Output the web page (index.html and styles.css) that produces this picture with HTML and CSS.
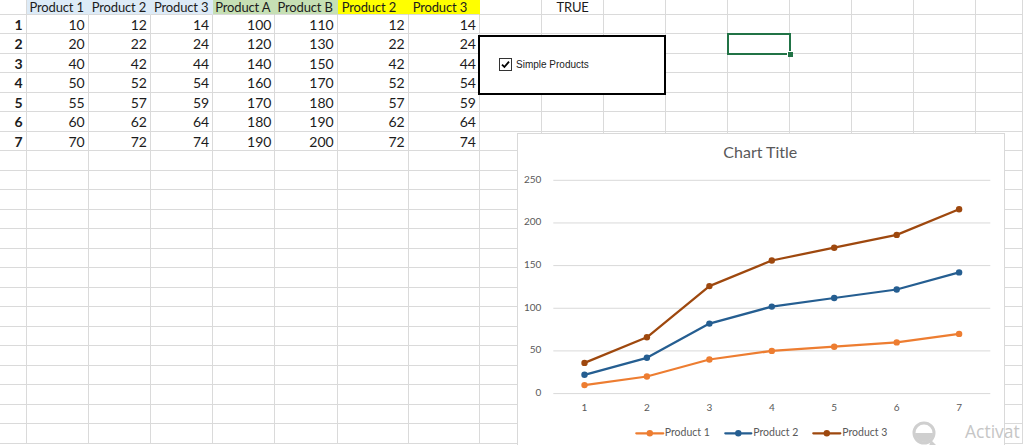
FILE: index.html
```html
<!DOCTYPE html>
<html>
<head>
<meta charset="utf-8">
<link rel="stylesheet" href="styles.css">
</head>
<body>
<div class="sheet">
  <div class="row head">
    <i></i><i class="blue">Product 1</i><i class="blue">Product 2</i><i class="blue">Product 3</i><i class="green">Product A</i><i class="green">Product B</i><i class="yellow">Product 2</i><i class="yellow">Product 3</i><i></i><i class="ctr">TRUE</i><i></i><i></i><i></i><i></i><i></i><i></i><i></i>
  </div>
  <div class="row"><b>1</b><i>10</i><i>12</i><i>14</i><i>100</i><i>110</i><i>12</i><i>14</i><i></i><i></i><i></i><i></i><i></i><i></i><i></i><i></i><i></i></div>
  <div class="row"><b>2</b><i>20</i><i>22</i><i>24</i><i>120</i><i>130</i><i>22</i><i>24</i><i></i><i></i><i></i><i></i><i class="sel"></i><i></i><i></i><i></i><i></i></div>
  <div class="row"><b>3</b><i>40</i><i>42</i><i>44</i><i>140</i><i>150</i><i>42</i><i>44</i><i></i><i></i><i></i><i></i><i></i><i></i><i></i><i></i><i></i></div>
  <div class="row"><b>4</b><i>50</i><i>52</i><i>54</i><i>160</i><i>170</i><i>52</i><i>54</i><i></i><i></i><i></i><i></i><i></i><i></i><i></i><i></i><i></i></div>
  <div class="row"><b>5</b><i>55</i><i>57</i><i>59</i><i>170</i><i>180</i><i>57</i><i>59</i><i></i><i></i><i></i><i></i><i></i><i></i><i></i><i></i><i></i></div>
  <div class="row"><b>6</b><i>60</i><i>62</i><i>64</i><i>180</i><i>190</i><i>62</i><i>64</i><i></i><i></i><i></i><i></i><i></i><i></i><i></i><i></i><i></i></div>
  <div class="row"><b>7</b><i>70</i><i>72</i><i>74</i><i>190</i><i>200</i><i>72</i><i>74</i><i></i><i></i><i></i><i></i><i></i><i></i><i></i><i></i><i></i></div>
  <div class="row"><b></b><i></i><i></i><i></i><i></i><i></i><i></i><i></i><i></i><i></i><i></i><i></i><i></i><i></i><i></i><i></i><i></i></div>
  <div class="row"><b></b><i></i><i></i><i></i><i></i><i></i><i></i><i></i><i></i><i></i><i></i><i></i><i></i><i></i><i></i><i></i><i></i></div>
  <div class="row"><b></b><i></i><i></i><i></i><i></i><i></i><i></i><i></i><i></i><i></i><i></i><i></i><i></i><i></i><i></i><i></i><i></i></div>
  <div class="row"><b></b><i></i><i></i><i></i><i></i><i></i><i></i><i></i><i></i><i></i><i></i><i></i><i></i><i></i><i></i><i></i><i></i></div>
  <div class="row"><b></b><i></i><i></i><i></i><i></i><i></i><i></i><i></i><i></i><i></i><i></i><i></i><i></i><i></i><i></i><i></i><i></i></div>
  <div class="row"><b></b><i></i><i></i><i></i><i></i><i></i><i></i><i></i><i></i><i></i><i></i><i></i><i></i><i></i><i></i><i></i><i></i></div>
  <div class="row"><b></b><i></i><i></i><i></i><i></i><i></i><i></i><i></i><i></i><i></i><i></i><i></i><i></i><i></i><i></i><i></i><i></i></div>
  <div class="row"><b></b><i></i><i></i><i></i><i></i><i></i><i></i><i></i><i></i><i></i><i></i><i></i><i></i><i></i><i></i><i></i><i></i></div>
  <div class="row"><b></b><i></i><i></i><i></i><i></i><i></i><i></i><i></i><i></i><i></i><i></i><i></i><i></i><i></i><i></i><i></i><i></i></div>
  <div class="row"><b></b><i></i><i></i><i></i><i></i><i></i><i></i><i></i><i></i><i></i><i></i><i></i><i></i><i></i><i></i><i></i><i></i></div>
  <div class="row"><b></b><i></i><i></i><i></i><i></i><i></i><i></i><i></i><i></i><i></i><i></i><i></i><i></i><i></i><i></i><i></i><i></i></div>
  <div class="row"><b></b><i></i><i></i><i></i><i></i><i></i><i></i><i></i><i></i><i></i><i></i><i></i><i></i><i></i><i></i><i></i><i></i></div>
  <div class="row"><b></b><i></i><i></i><i></i><i></i><i></i><i></i><i></i><i></i><i></i><i></i><i></i><i></i><i></i><i></i><i></i><i></i></div>
  <div class="row"><b></b><i></i><i></i><i></i><i></i><i></i><i></i><i></i><i></i><i></i><i></i><i></i><i></i><i></i><i></i><i></i><i></i></div>
  <div class="row"><b></b><i></i><i></i><i></i><i></i><i></i><i></i><i></i><i></i><i></i><i></i><i></i><i></i><i></i><i></i><i></i><i></i></div>
</div>

<div class="formbox">
  <div class="chk">
    <span class="box"><svg width="11" height="11" viewBox="0 0 11 11"><path d="M2 5.6 L4.4 8 L9 2.6" fill="none" stroke="#000" stroke-width="1.8"/></svg></span>
    <span class="lbl">Simple Products</span>
  </div>
</div>

<div class="chart">
  <svg width="488" height="320" viewBox="516.7 132.7 488 320">
    <text class="title" x="760" y="154">Chart Title</text>
    <g class="grid">
      <line x1="553" x2="990" y1="180" y2="180"/>
      <line x1="553" x2="990" y1="222.65" y2="222.65"/>
      <line x1="553" x2="990" y1="265.3" y2="265.3"/>
      <line x1="553" x2="990" y1="307.95" y2="307.95"/>
      <line x1="553" x2="990" y1="350.6" y2="350.6"/>
      <line x1="553" x2="990" y1="393.3" y2="393.3"/>
    </g>
    <g class="ylab">
      <text x="541" y="180">250</text>
      <text x="541" y="222.65">200</text>
      <text x="541" y="265.3">150</text>
      <text x="541" y="307.95">100</text>
      <text x="541" y="350.6">50</text>
      <text x="541" y="393.3">0</text>
    </g>
    <g class="xlab">
      <text x="584.2" y="408">1</text>
      <text x="646.6" y="408">2</text>
      <text x="709.1" y="408">3</text>
      <text x="771.5" y="408">4</text>
      <text x="833.9" y="408">5</text>
      <text x="896.4" y="408">6</text>
      <text x="958.8" y="408">7</text>
    </g>
    <g class="s1">
      <polyline points="584.2,384.8 646.6,376.2 709.1,359.2 771.5,350.6 833.9,346.4 896.4,342.1 958.8,333.6"/>
      <circle cx="584.2" cy="384.8" r="3.2"/><circle cx="646.6" cy="376.2" r="3.2"/><circle cx="709.1" cy="359.2" r="3.2"/><circle cx="771.5" cy="350.6" r="3.2"/><circle cx="833.9" cy="346.4" r="3.2"/><circle cx="896.4" cy="342.1" r="3.2"/><circle cx="958.8" cy="333.6" r="3.2"/>
    </g>
    <g class="s2">
      <polyline points="584.2,374.5 646.6,357.5 709.1,323.3 771.5,306.3 833.9,297.7 896.4,289.2 958.8,272.1"/>
      <circle cx="584.2" cy="374.5" r="3.2"/><circle cx="646.6" cy="357.5" r="3.2"/><circle cx="709.1" cy="323.3" r="3.2"/><circle cx="771.5" cy="306.3" r="3.2"/><circle cx="833.9" cy="297.7" r="3.2"/><circle cx="896.4" cy="289.2" r="3.2"/><circle cx="958.8" cy="272.1" r="3.2"/>
    </g>
    <g class="s3">
      <polyline points="584.2,362.6 646.6,337.0 709.1,285.8 771.5,260.2 833.9,247.4 896.4,234.6 958.8,209.0"/>
      <circle cx="584.2" cy="362.6" r="3.2"/><circle cx="646.6" cy="337.0" r="3.2"/><circle cx="709.1" cy="285.8" r="3.2"/><circle cx="771.5" cy="260.2" r="3.2"/><circle cx="833.9" cy="247.4" r="3.2"/><circle cx="896.4" cy="234.6" r="3.2"/><circle cx="958.8" cy="209.0" r="3.2"/>
    </g>
    <g class="legend">
      <g class="s1"><line x1="636" x2="663" y1="433" y2="433"/><circle cx="649.5" cy="433" r="3.2"/></g>
      <text x="664.5" y="433">Product 1</text>
      <g class="s2"><line x1="725" x2="751" y1="433" y2="433"/><circle cx="738" cy="433" r="3.2"/></g>
      <text x="753" y="433">Product 2</text>
      <g class="s3"><line x1="813" x2="840" y1="433" y2="433"/><circle cx="826.5" cy="433" r="3.2"/></g>
      <text x="842" y="433">Product 3</text>
    </g>
  </svg>
</div>

<div class="watermark">
  <svg class="wm-icon" width="32" height="28" viewBox="0 0 32 28">
    <circle cx="12" cy="15" r="10" fill="none" stroke="#cfcfcf" stroke-width="3"/>
    <path d="M3 15 A9 9 0 0 0 21 15 Z" fill="#cfcfcf"/>
    <path d="M19 22 L25 28 L17 28 Z" fill="#cfcfcf"/>
  </svg>
  <span class="wm-text">Activat</span>
</div>
</body>
</html>
```

FILE: styles.css
```css
html, body {
  margin: 0;
  padding: 0;
  background: #fff;
}
body {
  width: 1024px;
  height: 445px;
  overflow: hidden;
  position: relative;
  font-family: Lato, "Liberation Sans", sans-serif;
}
.sheet {
  display: flex;
  flex-direction: column;
  width: 1024px;
  height: 445px;
  overflow: hidden;
}
.row {
  display: grid;
  grid-template-columns: 26.5px repeat(5, 62.24px) 71px 71.3px repeat(8, 62.07px) 47px;
  height: 19.5px;
  flex: none;
}
.row.head {
  height: 14.5px;
}
.row > i, .row > b {
  box-sizing: border-box;
  border-right: 1px solid #dadada;
  border-bottom: 1px solid #dadada;
  font-style: normal;
  font-size: 14px;
  color: #1c1c1c;
  text-align: right;
  padding-right: 3px;
  line-height: 19px;
  white-space: nowrap;
  overflow: hidden;
}
.row > b {
  font-weight: 700;
  padding-right: 3px;
}
.row.head > i {
  font-size: 13px;
  letter-spacing: -0.15px;
  line-height: 14px;
  text-align: left;
  padding-left: 3px;
  padding-right: 0;
  overflow: visible;
}
.row.head > i.ctr {
  text-align: center;
  padding-left: 0;
}
.row > i.blue { background: #ddebf7; border-right-color: #ddebf7; }
.row > i.green { background: #c6e0b4; border-right-color: #c6e0b4; padding-left: 2px; }
.row > i.yellow { background: #ffff00; border-right-color: #ffff00; padding-left: 4px; }
.row > i.sel {
  position: relative;
  overflow: visible;
  outline: 2px solid #217346;
  outline-offset: -1px;
}
.row > i.sel::after {
  content: "";
  position: absolute;
  right: -4px;
  bottom: -4px;
  width: 5px;
  height: 5px;
  background: #217346;
  border: 1px solid #fff;
  border-right: 0;
  border-bottom: 0;
}

.formbox {
  position: absolute;
  left: 478px;
  top: 34.5px;
  width: 188px;
  height: 60px;
  box-sizing: border-box;
  border: 2px solid #000;
  background: #fff;
  padding: 21px 0 0 19px;
}
.chk {
  display: flex;
  align-items: center;
  gap: 4px;
}
.box {
  width: 13px;
  height: 13px;
  box-sizing: border-box;
  border: 1px solid #333;
  display: flex;
  align-items: center;
  justify-content: center;
  background: #fff;
}
.box svg { display: block; }
.lbl {
  font-family: "Liberation Sans", Arial, sans-serif;
  font-size: 10px;
  color: #222;
}

.chart {
  position: absolute;
  left: 516.7px;
  top: 132.7px;
  width: 488px;
  height: 320px;
  box-sizing: border-box;
  border: 1px solid #d9d9d9;
  background: #fff;
}
.chart svg {
  position: absolute;
  left: -1px;
  top: -1px;
  display: block;
}
.title {
  font-family: Lato, sans-serif;
  font-size: 16px;
  fill: #595959;
  text-anchor: middle;
  dominant-baseline: middle;
}
.grid line {
  stroke: #d9d9d9;
  stroke-width: 1;
}
.ylab text, .xlab text, .legend text {
  font-family: Lato, sans-serif;
  font-size: 10px;
  fill: #595959;
  dominant-baseline: middle;
}
.ylab text { text-anchor: end; }
.xlab text { text-anchor: middle; }
.legend text { font-size: 10.5px; }
.s1 polyline, .s2 polyline, .s3 polyline, .legend line {
  fill: none;
  stroke-width: 2.25;
  stroke-linejoin: round;
  stroke-linecap: round;
}
.s1 polyline, .s1 line { stroke: #ed7d31; }
.s1 circle { fill: #ed7d31; }
.s2 polyline, .s2 line { stroke: #255e91; }
.s2 circle { fill: #255e91; }
.s3 polyline, .s3 line { stroke: #9e480e; }
.s3 circle { fill: #9e480e; }

.watermark {
  position: absolute;
  left: 912px;
  top: 418px;
  display: flex;
  align-items: flex-start;
  gap: 21px;
  white-space: nowrap;
}
.wm-icon { display: block; flex: none; }
.wm-text {
  font-family: "Open Sans", sans-serif;
  font-size: 17.5px;
  color: #c6c6c6;
  line-height: 26px;
}
```
